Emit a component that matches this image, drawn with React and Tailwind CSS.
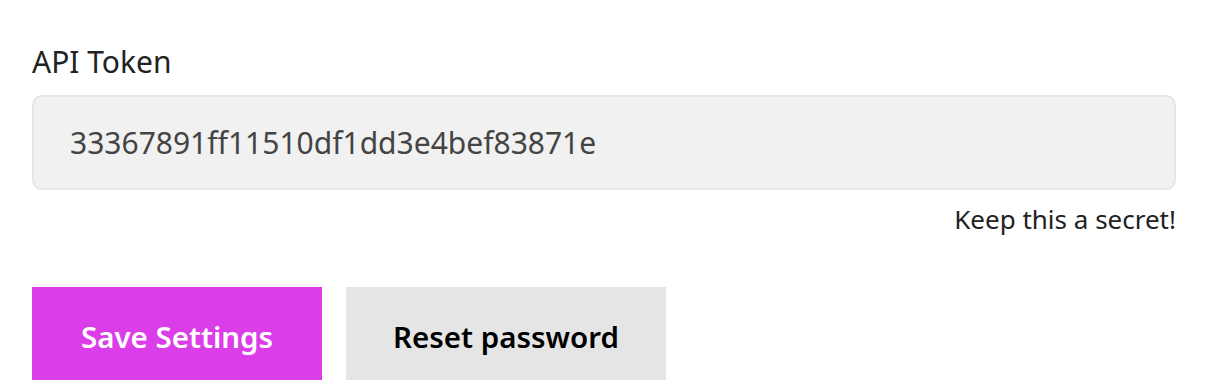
export default function App() {
  return (
    <div className="w-[1213px] h-[380px] overflow-hidden bg-white px-8 pt-[40px]" style={{ fontFamily: '"Noto Sans", "Open Sans", sans-serif' }}>
      <div className="text-[30px] leading-[44px] text-[#222]">API Token</div>
      <div className="mt-[11px] h-[95px] w-[1144px] rounded-[10px] border-2 border-[#e6e6e6] bg-[#f1f1f1] flex items-center pl-[36px] text-[30px] text-[#444]">
        33367891ff11510df1dd3e4bef83871e
      </div>
      <div className="w-[1144px] mt-[12px] text-right text-[26px] leading-[34px] text-[#222]">Keep this a secret!</div>
      <div className="mt-[51px] flex gap-6">
        <button className="h-[100px] w-[290px] bg-[#db3de8] text-white font-semibold text-[29.5px]">Save Settings</button>
        <button className="h-[100px] w-[320px] bg-[#e5e5e5] text-black font-semibold text-[29.5px]">Reset password</button>
      </div>
    </div>
  );
}
